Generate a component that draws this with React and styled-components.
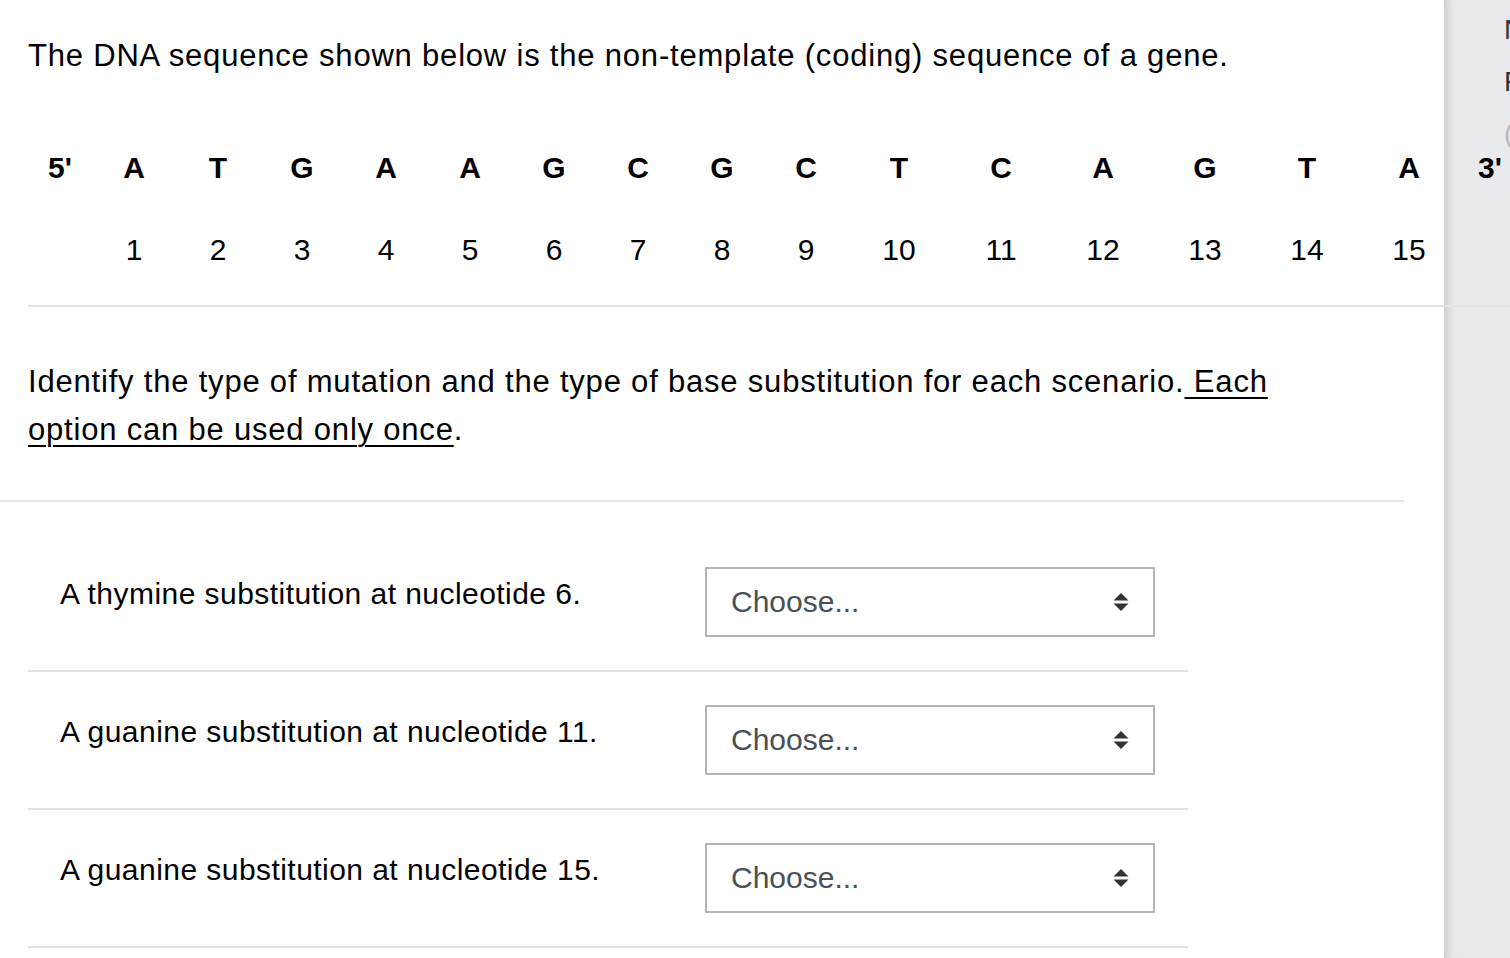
import styled, { createGlobalStyle } from "styled-components";

//==============================================================================
// STYLING
//==============================================================================
const GlobalStyle = createGlobalStyle`
  html, body {
    margin: 0;
    padding: 0;
    background: #ffffff;
    font-family: "Liberation Sans", Arial, Helvetica, sans-serif;
    color: #000;
  }
`

const Page = styled.div`
  display: flex;
  min-height: 958px;
  overflow: hidden;
`

const Main = styled.main`
  width: 1444px;
  flex-shrink: 0;
  position: relative;
  z-index: 1;
`

const Side = styled.aside`
  flex: 1;
  background: #e9eaee;
  box-shadow: inset 12px 0 10px -8px rgba(0, 0, 0, 0.14);
  padding: 4px 0 0 60px;
  overflow: hidden;
  white-space: nowrap;
`

const SideItem = styled.div`
  font-size: 28px;
  line-height: 52px;
  color: ${props => props.muted ? '#b8b9bd' : '#333'};
`

const Intro = styled.section`
  padding: 33px 0 0 28px;
`

const Lead = styled.p`
  margin: 0;
  font-size: 31px;
  letter-spacing: 0.8px;
  line-height: 45px;
`

const Sequence = styled.div`
  width: 1482px;
  margin: 67px 0 0 28px;
  padding-bottom: 33px;
  border-bottom: 2px solid #e3e5e8;
  display: grid;
  grid-template-columns: 64px repeat(9, 84px) repeat(6, 102px) 60px;
  row-gap: 37px;
`

const Base = styled.div`
  text-align: center;
  font-size: 30px;
  line-height: 45px;
  font-weight: ${props => props.bold ? 700 : 400};
`

const Prompt = styled.p`
  margin: 51px 0 0 28px;
  font-size: 31px;
  letter-spacing: 0.8px;
  line-height: 48px;
  max-width: 1270px;

  u {
    text-decoration-thickness: 2px;
    text-underline-offset: 5px;
  }
`

const Divider = styled.hr`
  width: 1404px;
  margin: 46px 0 0 0;
  border: none;
  border-top: 2px solid #e7e8eb;
`

const Questions = styled.div`
  width: 1160px;
  margin-left: 28px;
  padding-top: 32px;
`

const Row = styled.div`
  display: grid;
  grid-template-columns: 677px 450px;
  align-items: start;
  padding: 33px 0;
  border-bottom: 2px solid #dee2e6;
`

const Label = styled.div`
  padding: 4px 0 0 32px;
  font-size: 30px;
  letter-spacing: 0.45px;
  line-height: 45px;
`

const SelectBox = styled.div`
  box-sizing: border-box;
  height: 70px;
  border: 2px solid #b4b4b4;
  display: flex;
  align-items: center;
  justify-content: space-between;
  padding: 0 24px 0 24px;
  font-size: 30px;
  color: #495057;
`

//==============================================================================
// DATA
//==============================================================================
const bases = ['A', 'T', 'G', 'A', 'A', 'G', 'C', 'G', 'C', 'T', 'C', 'A', 'G', 'T', 'A']

const scenarios = [
    'A thymine substitution at nucleotide 6.',
    'A guanine substitution at nucleotide 11.',
    'A guanine substitution at nucleotide 15.',
]

const Arrows = () => (
    <svg width="16" height="20" viewBox="0 0 16 20">
        <polygon points="8,1 15.5,8.5 0.5,8.5" fill="#333"/>
        <polygon points="0.5,11.5 15.5,11.5 8,19" fill="#333"/>
    </svg>
)

//==============================================================================
// APP
//==============================================================================
const App = () => {
    return (
        <Page>
            <GlobalStyle/>
            <Main>
                <Intro>
                    <Lead>The DNA sequence shown below is the non-template (coding) sequence of a gene.</Lead>
                </Intro>
                <Sequence>
                    <Base bold>5'</Base>
                    {bases.map((b, i) => <Base bold key={'b' + i}>{b}</Base>)}
                    <Base bold>3'</Base>
                    <Base/>
                    {bases.map((b, i) => <Base key={'n' + i}>{i + 1}</Base>)}
                    <Base/>
                </Sequence>
                <Prompt>
                    Identify the type of mutation and the type of base substitution for each scenario.<u> Each option can be used only once</u>.
                </Prompt>
                <Divider/>
                <Questions>
                    {scenarios.map(s => (
                        <Row key={s}>
                            <Label>{s}</Label>
                            <SelectBox>
                                <span>Choose...</span>
                                <Arrows/>
                            </SelectBox>
                        </Row>
                    ))}
                </Questions>
            </Main>
            <Side>
                <SideItem>Navigation</SideItem>
                <SideItem>Finish attempt</SideItem>
                <SideItem muted>(</SideItem>
            </Side>
        </Page>
    )
}

export default App;
